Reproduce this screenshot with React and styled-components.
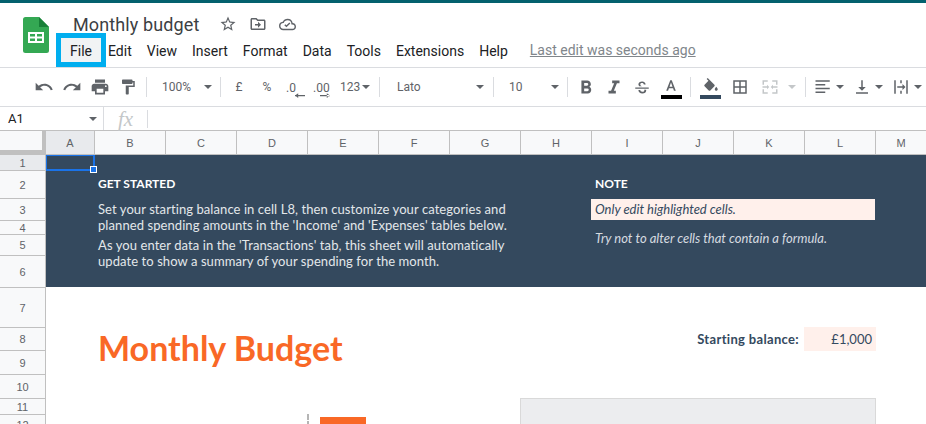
import React from 'react'
import styled, { createGlobalStyle } from 'styled-components'

const GlobalStyle = createGlobalStyle`
  html, body {
    margin: 0;
    padding: 0;
    width: 926px;
    height: 424px;
    overflow: hidden;
    background: #fff;
    font-family: Roboto, sans-serif;
  }
`

const Page = styled.div`
  width: 926px;
  height: 424px;
  overflow: hidden;
  display: flex;
  flex-direction: column;
  border-top: 3px solid #03616e;
  box-sizing: border-box;
`

const Header = styled.header`
  height: 64px;
  display: flex;
  flex-shrink: 0;
  padding-left: 23px;
  box-sizing: border-box;
`

const LogoBox = styled.div`
  width: 26px;
  padding-top: 14px;
`

const HeaderMain = styled.div`
  margin-left: 23px;
  display: flex;
  flex-direction: column;
`

const TitleRow = styled.div`
  height: 30px;
  padding-top: 12px;
  display: flex;
  align-items: center;
  box-sizing: border-box;
`

const DocTitle = styled.div`
  font-size: 18px;
  color: #3c4043;
  padding-left: 1px;
  width: 146px;
  letter-spacing: 0.12px;
`

const TitleIcons = styled.div`
  display: flex;
  gap: 12px;
  align-items: center;
`

const MenuRow = styled.nav`
  display: flex;
  align-items: center;
  height: 34px;
  margin-left: -16px;
`

const MenuItem = styled.div`
  font-size: 14px;
  color: #202124;
  padding: 2px 7.5px 0;
  line-height: 24px;
`

const FileItem = styled(MenuItem)`
  background: #f1f3f4;
  border: 5px solid #00aeef;
  height: 23px;
  padding: 1px 0 0;
  margin-right: -5.5px;
  width: 40px;
  text-align: center;
`

const LastEdit = styled.div`
  font-size: 14px;
  color: #80868b;
  text-decoration: underline;
  margin-left: 14.5px;
`

const Toolbar = styled.div`
  height: 38px;
  flex-shrink: 0;
  display: flex;
  align-items: center;
  border-top: 1px solid #dadce0;
  border-bottom: 1px solid #dadce0;
  padding-left: 30px;
  color: #5f6368;
`

const ToolSlot = styled.div`
  width: ${({ $w }) => $w || 22}px;
  margin-left: ${({ $ml }) => $ml || 0}px;
  height: 24px;
  display: flex;
  align-items: center;
  justify-content: ${({ $left }) => ($left ? 'flex-start' : 'center')};
  flex-shrink: 0;
  font-size: 12px;
  color: #5f6368;
  position: relative;
`

const ToolLabel = styled.span`
  margin-left: ${({ $ml }) => $ml}px;
  width: ${({ $w }) => $w}px;
  flex-shrink: 0;
`

const ToolSep = styled.div`
  width: 1px;
  height: 20px;
  background: #dadce0;
  flex-shrink: 0;
  margin-left: ${({ $ml }) => $ml || 0}px;
`

const Caret = styled.span`
  width: 0;
  height: 0;
  border-left: 4px solid transparent;
  border-right: 4px solid transparent;
  border-top: 4px solid ${({ $off }) => ($off ? '#c4c7c9' : '#5f6368')};
  display: block;
  flex-shrink: 0;
`

const ColorBar = styled.span`
  position: absolute;
  left: ${({ $l }) => $l}px;
  bottom: 0;
  width: 21px;
  height: 4px;
  background: ${({ $c }) => $c};
`

const FormulaBar = styled.div`
  height: 23px;
  flex-shrink: 0;
  display: flex;
  align-items: center;
  border-bottom: 1px solid #c0c0c0;
`

const NameBox = styled.div`
  width: 104px;
  box-sizing: border-box;
  height: 23px;
  border-right: 1px solid #dadce0;
  padding: 0 6px 0 8px;
  display: flex;
  align-items: center;
  justify-content: space-between;
  font-size: 13px;
  color: #202124;
`

const FxMark = styled.div`
  width: 44px;
  height: 18px;
  box-sizing: border-box;
  border-right: 1px solid #dadce0;
  font-family: "Liberation Serif", serif;
  font-style: italic;
  font-size: 21px;
  line-height: 18px;
  color: #c4c7c9;
  text-align: center;
`

const Grid = styled.div`
  flex: 1;
  display: grid;
  grid-template-columns: 46px 1fr;
  grid-template-rows: 24px 1fr;
  min-height: 0;
`

const Corner = styled.div`
  background: #f8f9fa;
  border-right: 4px solid #c0c0c0;
  border-bottom: 5px solid #c0c0c0;
  box-sizing: border-box;
  height: 24px;
`

const ColHeader = styled.div`
  display: flex;
  background: #f8f9fa;
  border-bottom: 1px solid #c0c0c0;
  box-sizing: border-box;
`

const ColCell = styled.div`
  width: ${({ $w }) => $w}px;
  flex-shrink: 0;
  box-sizing: border-box;
  border-right: 1px solid #c0c0c0;
  display: flex;
  align-items: center;
  justify-content: center;
  font-family: "Liberation Sans", Arial, sans-serif;
  font-size: 11px;
  color: #5f6368;
  background: ${({ $active }) => ($active ? '#e8eaed' : 'transparent')};
`

const RowHeader = styled.div`
  display: flex;
  flex-direction: column;
  background: #f8f9fa;
  border-right: 1px solid #c0c0c0;
  box-sizing: border-box;
  overflow: hidden;
`

const RowCell = styled.div`
  height: ${({ $h }) => $h}px;
  flex-shrink: 0;
  box-sizing: border-box;
  border-bottom: 1px solid #c0c0c0;
  display: flex;
  align-items: center;
  justify-content: center;
  font-family: "Liberation Sans", Arial, sans-serif;
  font-size: 11px;
  color: #5f6368;
  background: ${({ $active }) => ($active ? '#e8eaed' : 'transparent')};
`

const Sheet = styled.div`
  position: relative;
  overflow: hidden;
  font-family: Lato, sans-serif;
  min-width: 0;
  border-right: 1px solid #eceef0;
  box-sizing: border-box;
`

const Banner = styled.section`
  height: 132px;
  background: #34495e;
  display: flex;
  color: #eef1f3;
  box-sizing: border-box;
  padding: 22px 0 0 52px;
`

const BannerLeft = styled.div`
  width: 497px;
  flex-shrink: 0;
`

const BannerRight = styled.div`
  width: 280px;
  flex-shrink: 0;
`

const BannerHead = styled.div`
  font-size: 12px;
  font-weight: 700;
  color: #fff;
  line-height: 14px;
`

const BannerText = styled.p`
  margin: ${({ $top }) => $top}px 0 0;
  font-size: 13px;
  line-height: 16px;
  color: #e3e7ea;
  letter-spacing: 0.08px;
`

const NoteHighlight = styled.div`
  margin: 8px 0 0 -4px;
  height: 21px;
  background: #fff0eb;
  color: #34495e;
  font-size: 13px;
  font-style: italic;
  line-height: 21px;
  padding-left: 4px;
`

const NoteLine = styled.div`
  margin-top: 10px;
  font-size: 13px;
  font-style: italic;
  color: #d6dbe0;
  line-height: 16px;
`

const Body = styled.section`
  display: grid;
  grid-template-columns: 422px 356px;
  padding-left: 52px;
`

const BigTitle = styled.h1`
  margin: 38px 0 0;
  font-family: Lato, sans-serif;
  font-weight: 700;
  font-size: 34px;
  line-height: 46px;
  color: #f96826;
`

const BalanceRow = styled.div`
  margin-top: 40px;
  height: 24px;
  display: flex;
  justify-content: flex-end;
  align-items: center;
  font-size: 13px;
`

const BalanceLabel = styled.div`
  font-weight: 700;
  color: #34495e;
  margin-right: 5px;
  letter-spacing: 0.33px;
`

const BalanceValue = styled.div`
  width: 72px;
  height: 24px;
  background: #fff0eb;
  line-height: 24px;
  text-align: right;
  padding-right: 4px;
  box-sizing: border-box;
  color: #34495e;
`

const ChartLeft = styled.div`
  display: flex;
  align-items: flex-start;
  margin-top: 43px;
  padding-left: 209px;
`

const DashedAxis = styled.div`
  width: 0;
  height: 20px;
  border-left: 2px dashed #b5b5b5;
`

const OrangeBar = styled.div`
  margin: 3px 0 0 11px;
  width: 46px;
  height: 20px;
  background: #f96826;
`

const ChartBox = styled.div`
  margin-top: 27px;
  height: 60px;
  background: #ecedef;
  border: 1px solid #d9d9d9;
  box-sizing: border-box;
`

const SelectedCell = styled.div`
  position: absolute;
  left: 0;
  top: 0;
  width: 49px;
  height: 16px;
  box-sizing: border-box;
  border: 1px solid #1a73e8;
  border-right-width: 2px;
  border-bottom-width: 2px;
  &::after {
    content: '';
    position: absolute;
    right: -4px;
    bottom: -4px;
    width: 5px;
    height: 5px;
    background: #1a73e8;
    border: 1px solid #fff;
  }
`

const Svg = ({ size = 18, fill = 'currentColor', children }) => (
  <svg width={size} height={size} viewBox="0 0 24 24" fill={fill}>{children}</svg>
)

const SheetsLogo = () => (
  <svg width="26" height="36" viewBox="0 0 26 36">
    <path d="M16 0H2.5A2.5 2.5 0 0 0 0 2.500v31A2.5 2.5 0 0 0 2.500 36h21a2.500 2.500 0 0 0 2.500-2.500V10z" fill="#34a853" />
    <path d="M16 0v10h10z" fill="#188038" />
    <path d="M5 15h16v11H5z M7 17v2.600h5V17z M14 17v2.600h5V17z M7 21.400V24h5v-2.600z M14 21.400V24h5v-2.600z" fill="#fff" fillRule="evenodd" />
  </svg>
)

const DecimalIcon = ({ label, textX, arrow }) => (
  <svg width="26" height="24" viewBox="0 0 26 24" fill="currentColor">
    <text x={textX} y="17" fontSize="12" fontFamily="Roboto, sans-serif">{label}</text>
    <path d={arrow} />
  </svg>
)

const columns = [
  ['A', 49, true], ['B', 71], ['C', 71], ['D', 71], ['E', 71], ['F', 71], ['G', 71],
  ['H', 71], ['I', 71], ['J', 71], ['K', 71], ['L', 71], ['M', 51],
]

const rows = [
  [1, 16, true], [2, 28], [3, 22], [4, 14], [5, 21], [6, 32], [7, 40], [8, 23],
  [9, 24], [10, 24], [11, 16], [12, 20],
]

const menus = ['Edit', 'View', 'Insert', 'Format', 'Data', 'Tools', 'Extensions', 'Help']

function App() {
  return (
    <Page>
      <GlobalStyle />
      <Header>
        <LogoBox><SheetsLogo /></LogoBox>
        <HeaderMain>
          <TitleRow>
            <DocTitle>Monthly budget</DocTitle>
            <TitleIcons>
              <Svg fill="#5f6368"><path d="M22 9.24l-7.19-.62L12 2 9.19 8.63 2 9.24l5.46 4.73L5.82 21 12 17.27 18.180 21l-1.630-7.030L22 9.240zM12 15.400l-3.760 2.270 1-4.280-3.320-2.880 4.380-.380L12 6.100l1.710 4.040 4.380.380-3.320 2.880 1 4.280L12 15.400z" /></Svg>
              <Svg fill="#5f6368"><path d="M20 6h-8l-2-2H4c-1.100 0-2 .9-2 2v12c0 1.100.9 2 2 2h16c1.100 0 2-.9 2-2V8c0-1.100-.9-2-2-2zm0 12H4V6h5.170l2 2H20v10zm-8-1l4-4-4-4v3H8v2h4v3z" /></Svg>
              <Svg size={17} fill="#5f6368"><path d="M19.350 10.040A7.490 7.490 0 0 0 12 4C9.110 4 6.600 5.640 5.350 8.040A5.994 5.994 0 0 0 0 14c0 3.310 2.690 6 6 6h13c2.760 0 5-2.240 5-5 0-2.640-2.050-4.780-4.650-4.960zM19 18H6c-2.210 0-4-1.790-4-4s1.790-4 4-4h.71A5.500 5.500 0 0 1 12 6a5.500 5.500 0 0 1 5.500 5.500v.5H19c1.660 0 3 1.340 3 3s-1.340 3-3 3zm-8.500-2l-3-3 1.400-1.400 1.600 1.600 4.100-4.100 1.400 1.400z" /></Svg>
            </TitleIcons>
          </TitleRow>
          <MenuRow>
            <FileItem>File</FileItem>
            {menus.map((m) => <MenuItem key={m}>{m}</MenuItem>)}
            <LastEdit>Last edit was seconds ago</LastEdit>
          </MenuRow>
        </HeaderMain>
      </Header>

      <Toolbar>
        <ToolSlot $w={28}><Svg size={20}><path d="M12.500 8c-2.650 0-5.050.99-6.900 2.600L2 7v9h9l-3.620-3.620c1.390-1.160 3.160-1.880 5.120-1.880 3.540 0 6.550 2.310 7.600 5.500l2.370-.78C21.080 11.030 17.150 8 12.500 8z" /></Svg></ToolSlot>
        <ToolSlot $w={28}><Svg size={20}><path d="M18.400 10.600C16.550 8.990 14.150 8 11.500 8c-4.650 0-8.580 3.030-9.970 7.220l2.370.78C4.950 12.810 7.960 10.500 11.500 10.500c1.960 0 3.730.72 5.120 1.880L13 16h9V7z" /></Svg></ToolSlot>
        <ToolSlot $w={28}><Svg size={20}><path d="M19 8H5c-1.660 0-3 1.340-3 3v6h4v4h12v-4h4v-6c0-1.660-1.340-3-3-3zm-3 11H8v-5h8v5zm3-7a1 1 0 1 1 0-2 1 1 0 0 1 0 2zm-1-9H6v4h12V3z" /></Svg></ToolSlot>
        <ToolSlot $w={28}><Svg><path d="M18 4V3a1 1 0 0 0-1-1H5a1 1 0 0 0-1 1v4a1 1 0 0 0 1 1h12a1 1 0 0 0 1-1V6h1v4H9v11a1 1 0 0 0 1 1h2a1 1 0 0 0 1-1v-9h8V4h-3z" /></Svg></ToolSlot>
        <ToolSep $ml={4} />
        <ToolSlot $w={73} $left><ToolLabel $ml={15} $w={42}>100%</ToolLabel><Caret /></ToolSlot>
        <ToolSep />
        <ToolSlot $ml={7}>£</ToolSlot>
        <ToolSlot $ml={6}>%</ToolSlot>
        <ToolSlot $ml={1} $w={26}>
          <DecimalIcon label=".0" textX="7" arrow="M16 20h10v1.300H16zM16 20.600l3.200-2.300v4.600z" />
        </ToolSlot>
        <ToolSlot $ml={4} $w={26}>
          <DecimalIcon label=".00" textX="4" arrow="M11 20h10v1.300H11zM21 20.600l-3.200-2.300v4.600z" />
        </ToolSlot>
        <ToolSlot $w={44} $left><ToolLabel $ml={5} $w={22}>123</ToolLabel><Caret /></ToolSlot>
        <ToolSep />
        <ToolSlot $w={113} $left><ToolLabel $ml={17} $w={79}>Lato</ToolLabel><Caret /></ToolSlot>
        <ToolSep />
        <ToolSlot $w={73} $left><ToolLabel $ml={15} $w={42}>10</ToolLabel><Caret /></ToolSlot>
        <ToolSep />
        <ToolSlot $ml={7}><Svg size={22}><path d="M15.600 11.800c1-.7 1.700-1.800 1.700-2.800 0-2.300-1.800-4-4-4H7v14h7c2.100 0 3.700-1.700 3.700-3.800 0-1.500-.9-2.800-2.100-3.400zM10 7.500h3a1.500 1.500 0 0 1 0 3h-3v-3zm3.500 9H10v-3h3.500a1.500 1.500 0 0 1 0 3z" /></Svg></ToolSlot>
        <ToolSlot $ml={6}><Svg size={22}><path d="M10 5v3h2.200l-3.400 8H6v3h8v-3h-2.200l3.400-8H18V5z" /></Svg></ToolSlot>
        <ToolSlot $ml={6}><Svg><path d="M3 12.500h18v1.800H3zM12.200 4.500c-2.900 0-5 1.500-5 3.800 0 1.100.4 1.900 1.100 2.600h3.800c-1.500-.5-2.400-1.100-2.400-2.400 0-1 1-1.700 2.400-1.700 1.500 0 2.300.8 2.300 2h2.500c0-2.600-1.900-4.300-4.700-4.300zM14.700 15.500c.3.300.4.600.4 1 0 1-1 1.700-2.600 1.700-1.700 0-2.800-.8-2.800-2.200H7.200c0 2.900 2.400 4.500 5.300 4.500 3 0 5.100-1.500 5.100-4 0-.4 0-.7-.2-1z" /></Svg></ToolSlot>
        <ToolSlot $ml={7}>
          <Svg><path d="M11 3l-5.400 14h2.500l1.100-3.200h5.600l1.100 3.200h2.500L13 3zm-1 8.700L12 6l2 5.700z" /></Svg>
          <ColorBar $l={1} $c="#000" />
        </ToolSlot>
        <ToolSep $ml={8} />
        <ToolSlot $ml={9}>
          <Svg><path d="M16.560 8.940L7.620 0 6.210 1.410l2.380 2.380-5.150 5.150a1.490 1.490 0 0 0 0 2.120l5.500 5.500c.29.29.68.44 1.060.44s.77-.15 1.060-.44l5.500-5.500c.59-.58.59-1.530 0-2.120zM19 11.500s-2 2.170-2 3.500c0 1.100.9 2 2 2s2-.9 2-2c0-1.330-2-3.500-2-3.500z" /></Svg>
          <ColorBar $l={0} $c="#34495e" />
        </ToolSlot>
        <ToolSlot $ml={7}><Svg><path d="M3 3v18h18V3H3zm8 16H5v-6h6v6zm0-8H5V5h6v6zm8 8h-6v-6h6v6zm0-8h-6V5h6v6z" /></Svg></ToolSlot>
        <ToolSlot $ml={8}><Svg fill="#c4c7c9"><path d="M2 3h7v2H4v4H2zM15 3h7v6h-2V5h-5zM2 15h2v4h5v2H2zM20 15h2v6h-7v-2h5zM2 11h6v2H2zM16 11h6v2h-6zM8 9l3 3-3 3zM16 9l-3 3 3 3z" /></Svg></ToolSlot>
        <ToolSlot $ml={5} $w={12}><Caret $off /></ToolSlot>
        <ToolSep $ml={7} />
        <ToolSlot $ml={6}><Svg><path d="M2 3h19v2H2zM2 8h13v2H2zM2 13h19v2H2zM2 18h13v2H2z" /></Svg></ToolSlot>
        <ToolSlot $w={12}><Caret /></ToolSlot>
        <ToolSlot $ml={5}><Svg><path d="M4 19h16v2H4zM11 3h2v9h4l-5 5-5-5h4z" /></Svg></ToolSlot>
        <ToolSlot $w={12}><Caret /></ToolSlot>
        <ToolSlot $ml={5}><Svg><path d="M3 3h2v18H3zM19 3h2v18h-2zM11 3h2v4h-2zM11 17h2v4h-2zM7 11h7V8l4 4-4 4v-3H7z" /></Svg></ToolSlot>
        <ToolSlot $w={12}><Caret /></ToolSlot>
      </Toolbar>

      <FormulaBar>
        <NameBox><span>A1</span><Caret /></NameBox>
        <FxMark>fx</FxMark>
      </FormulaBar>

      <Grid>
        <Corner />
        <ColHeader>
          {columns.map(([l, w, active]) => <ColCell key={l} $w={w} $active={active}>{l}</ColCell>)}
        </ColHeader>
        <RowHeader>
          {rows.map(([n, h, active]) => <RowCell key={n} $h={h} $active={active}>{n}</RowCell>)}
        </RowHeader>
        <Sheet>
          <Banner>
            <BannerLeft>
              <BannerHead>GET STARTED</BannerHead>
              <BannerText $top={10}>Set your starting balance in cell L8, then customize your categories and<br />planned spending amounts in the 'Income' and 'Expenses' tables below.</BannerText>
              <BannerText $top={4}>As you enter data in the 'Transactions' tab, this sheet will automatically<br />update to show a summary of your spending for the month.</BannerText>
            </BannerLeft>
            <BannerRight>
              <BannerHead>NOTE</BannerHead>
              <NoteHighlight>Only edit highlighted cells.</NoteHighlight>
              <NoteLine>Try not to alter cells that contain a formula.</NoteLine>
            </BannerRight>
          </Banner>
          <Body>
            <BigTitle>Monthly Budget</BigTitle>
            <BalanceRow>
              <BalanceLabel>Starting balance:</BalanceLabel>
              <BalanceValue>£1,000</BalanceValue>
            </BalanceRow>
            <ChartLeft>
              <DashedAxis />
              <OrangeBar />
            </ChartLeft>
            <ChartBox />
          </Body>
          <SelectedCell />
        </Sheet>
      </Grid>
    </Page>
  )
}

export default App
